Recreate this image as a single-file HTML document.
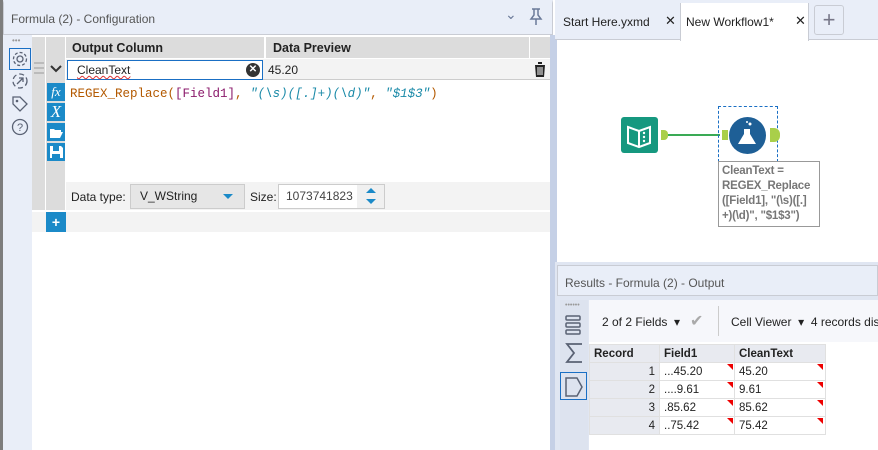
<!DOCTYPE html>
<html><head><style>
*{margin:0;padding:0;box-sizing:border-box}
body{width:878px;height:450px;overflow:hidden;background:#fff;font-family:"Liberation Sans",sans-serif;font-size:12px;color:#222;position:relative}
.a{position:absolute}
.mono{font-family:"Liberation Mono",monospace}
.ib{background:#1b8ac8;width:18px;height:18px;color:#fff;text-align:center;font-size:13px;line-height:18px;font-style:italic;font-family:"Liberation Serif",serif}
td{border:1px solid #e0e0e0;padding:0 4px;height:18px;font-size:11.5px}
</style></head><body>
<div class="a" style="left:0;top:0;width:3px;height:450px;background:#7d7d7d"></div>
<!-- left header -->
<div class="a" style="left:3px;top:0;width:550px;height:35px;background:#e9eef8;border:1px solid #c9ccd4;border-top:3px solid #e9eef8"></div>
<div class="a" style="left:11px;top:12px;color:#555">Formula (2) - Configuration</div>
<div class="a" style="left:505px;top:6px;color:#6b7a99;font-size:14px">&#8964;</div>
<svg class="a" style="left:528px;top:8px" width="16" height="18"><path d="M4 1h8M6 1v6l-3 4h10l-3-4V1M8 11v6" stroke="#6b7a99" stroke-width="1.5" fill="none"/></svg>
<!-- sidebar -->
<div class="a" style="left:3px;top:35px;width:29px;height:415px;background:#e9eef8"></div>
<div class="a" style="left:12px;top:36px;color:#999;font-size:8px">•••</div>
<div class="a" style="left:9px;top:48px;width:22px;height:22px;border:1px solid #1a6fc4"></div>
<svg class="a" style="left:10px;top:49px" width="20" height="20"><circle cx="10" cy="10" r="3" fill="none" stroke="#5a6274" stroke-width="1.3"/><circle cx="10" cy="10" r="6.5" fill="none" stroke="#5a6274" stroke-width="1.3" stroke-dasharray="3 2"/></svg>
<svg class="a" style="left:10px;top:71px" width="20" height="20"><circle cx="10" cy="10" r="7" fill="none" stroke="#5a6274" stroke-width="1.3" stroke-dasharray="5 3"/><path d="M7 13l6-6M9 7h4v4" stroke="#5a6274" stroke-width="1.3" fill="none"/></svg>
<svg class="a" style="left:10px;top:94px" width="20" height="20"><path d="M3 3h7l7 7-7 7-7-7z" fill="none" stroke="#5a6274" stroke-width="1.3"/><circle cx="7" cy="7" r="1.3" fill="#5a6274"/></svg>
<svg class="a" style="left:10px;top:117px" width="20" height="20"><circle cx="10" cy="10" r="7.5" fill="none" stroke="#5a6274" stroke-width="1.3"/><text x="10" y="14" font-size="11" text-anchor="middle" fill="#5a6274" font-family="Liberation Sans">?</text></svg>
<!-- grid -->
<div class="a" style="left:32px;top:35px;width:518px;height:415px;background:#fff"></div>
<div class="a" style="left:32px;top:37px;width:13px;height:173px;background:#dcdcdc"></div>
<div class="a" style="left:46px;top:37px;width:19px;height:173px;background:#dcdcdc"></div>
<div class="a" style="left:66px;top:37px;width:484px;height:21px;background:#dcdcdc"></div>
<div class="a" style="left:264px;top:37px;width:2px;height:21px;background:#fff"></div>
<div class="a" style="left:529px;top:37px;width:1px;height:21px;background:#fff"></div>
<div class="a" style="left:72px;top:41px;font-weight:bold;font-size:12.5px">Output Column</div>
<div class="a" style="left:273px;top:41px;font-weight:bold;font-size:12.5px">Data Preview</div>
<div class="a" style="left:66px;top:59px;width:484px;height:21px;background:#f3f3f3;border-bottom:1px solid #ccc"></div>
<div class="a" style="left:34px;top:62px;width:10px;height:12px;border-top:2px solid #bbb;border-bottom:2px solid #bbb"><div style="margin-top:3px;border-top:2px solid #bbb"></div></div>
<svg class="a" style="left:49px;top:64px" width="14" height="10"><path d="M2 2l5 5 5-5" stroke="#333" stroke-width="2" fill="none"/></svg>
<div class="a" style="left:67px;top:60px;width:196px;height:20px;background:#fff;border:1px solid #1a6fc4"></div>
<div class="a" style="left:77px;top:63px;text-decoration:underline wavy #d33;text-decoration-thickness:1px">CleanText</div>
<div class="a" style="left:246px;top:63px;width:14px;height:14px;border-radius:50%;background:#333;color:#fff;font-size:10px;line-height:14px;text-align:center;font-weight:bold">✕</div>
<div class="a" style="left:268px;top:63px">45.20</div>
<svg class="a" style="left:533px;top:61px" width="14" height="17"><path d="M1 3h12M5 3V1h4v2M2 4h10l-1 12H3z" fill="#222"/><path d="M5 6v8M7 6v8M9 6v8" stroke="#fff"/></svg>
<div class="a ib" style="left:47px;top:83px">fx</div>
<div class="a ib" style="left:47px;top:103px;font-size:17px">X</div>
<div class="a ib" style="left:47px;top:123px"><svg width="18" height="18"><path d="M3 6h4l1 1h6v2H6l-3 6z M6 9h10l-3 6H3z" fill="#fff"/></svg></div>
<div class="a ib" style="left:47px;top:143px"><svg width="18" height="18"><path d="M3 3h11l2 2v10H3z" fill="#fff"/><rect x="6" y="3" width="6" height="5" fill="#1b8ac8"/><rect x="5" y="11" width="8" height="4" fill="#1b8ac8"/></svg></div>
<div class="a mono" style="left:70px;top:87px;font-size:12.5px;color:#b35900;white-space:pre">REGEX_Replace(<span style="color:#8b1a6b">[Field1]</span>, <i style="color:#1a8aa8">"(\s)([.]+)(\d)"</i>, <i style="color:#1a8aa8">"$1$3"</i>)</div>
<div class="a" style="left:66px;top:182px;width:484px;height:28px;background:#f3f3f3"></div>
<div class="a" style="left:71px;top:190px">Data type:</div>
<div class="a" style="left:130px;top:184px;width:115px;height:25px;background:#e6e6e6;border:1px solid #ccc"></div>
<div class="a" style="left:140px;top:189px">V_WString</div>
<div class="a" style="left:223px;top:194px;width:0;height:0;border-left:5px solid transparent;border-right:5px solid transparent;border-top:5px solid #1b8ac8"></div>
<div class="a" style="left:250px;top:190px">Size:</div>
<div class="a" style="left:278px;top:184px;width:107px;height:25px;background:#fff;border:1px solid #ccc"></div>
<div class="a" style="left:286px;top:189px;color:#444">1073741823</div>
<div class="a" style="left:357px;top:185px;width:27px;height:23px;background:#f0f0f0"></div>
<div class="a" style="left:366px;top:188px;border-left:5px solid transparent;border-right:5px solid transparent;border-bottom:5px solid #1b8ac8"></div>
<div class="a" style="left:366px;top:199px;border-left:5px solid transparent;border-right:5px solid transparent;border-top:5px solid #1b8ac8"></div>
<div class="a" style="left:32px;top:212px;width:518px;height:20px;background:#f3f3f3"></div>
<div class="a" style="left:46px;top:212px;width:20px;height:20px;background:#1b8ac8;color:#fff;font-weight:bold;text-align:center;line-height:20px;font-size:14px">+</div>
<div class="a" style="left:550px;top:35px;width:5px;height:415px;background:#c5d0e6"></div>
<!-- right -->
<div class="a" style="left:555px;top:0;width:323px;height:40px;background:#e9eef8;border-bottom:1px solid #c9ccd4"></div>
<div class="a" style="left:563px;top:15px">Start Here.yxmd</div>
<div class="a" style="left:665px;top:13px;font-size:13px">✕</div>
<div class="a" style="left:680px;top:3px;width:129px;height:38px;background:#fff;border-left:1px solid #c9ccd4;border-right:1px solid #c9ccd4"></div>
<div class="a" style="left:686px;top:15px">New Workflow1*</div>
<div class="a" style="left:795px;top:13px;font-size:13px">✕</div>
<div class="a" style="left:814px;top:5px;width:30px;height:30px;border:1px solid #c9ccd4;border-radius:3px;color:#778;text-align:center;font-size:22px;line-height:27px">+</div>
<div class="a" style="left:555px;top:40px;width:2px;height:222px;background:#c5d0e6"></div>
<div class="a" style="left:621px;top:117px;width:37px;height:36px;background:#16987f;border-radius:3px"></div>
<svg class="a" style="left:621px;top:117px" width="37" height="36"><path d="M7 10l11 4 11-4v16l-11 4-11-4z" fill="none" stroke="#fff" stroke-width="2"/><path d="M18 14v16" stroke="#fff" stroke-width="2"/><circle cx="23" cy="16" r="1.2" fill="#fff"/><circle cx="23" cy="20" r="1.2" fill="#fff"/><circle cx="23" cy="24" r="1.2" fill="#fff"/></svg>
<div class="a" style="left:661px;top:130px;width:7px;height:10px;background:#a9cf4a;border-radius:0 4px 4px 0"></div>
<div class="a" style="left:668px;top:134px;width:52px;height:2px;background:#3aaa55"></div>
<div class="a" style="left:718px;top:106px;width:60px;height:56px;border:1px dashed #1a6fc4"></div>
<div class="a" style="left:722px;top:130px;width:6px;height:10px;background:#a9cf4a"></div>
<div class="a" style="left:729px;top:117px;width:37px;height:37px;border-radius:50%;background:#1e5f96"></div>
<svg class="a" style="left:729px;top:117px" width="37" height="37"><path d="M15 12h6v5l6 10H9l6-10z" fill="#fff"/><circle cx="21" cy="7" r="1.5" fill="#fff"/><circle cx="18" cy="5" r="1" fill="#fff"/></svg>
<div class="a" style="left:770px;top:128px;width:10px;height:14px;background:#a9cf4a;border-radius:0 6px 6px 0"></div>
<div class="a" style="left:718px;top:161px;width:102px;height:66px;background:#fff;border:1px solid #999;padding:2px 3px;color:#777;font-size:11.5px;font-weight:bold;line-height:15px;white-space:nowrap;overflow:hidden;letter-spacing:-0.2px">CleanText =<br>REGEX_Replace<br>([Field1], "(\s)([.]<br>+)(\d)", "$1$3")</div>
<div class="a" style="left:555px;top:262px;width:323px;height:188px;background:#e0e6f2"></div>
<div class="a" style="left:557px;top:265px;width:321px;height:31px;background:#e9eef8;border:1px solid #c9ccd4"></div>
<div class="a" style="left:565px;top:276px;color:#555">Results - Formula (2) - Output</div>
<div class="a" style="left:560px;top:300px;width:28px;height:150px;background:#dde3ef"></div>
<div class="a" style="left:565px;top:302px;color:#999;font-size:7px">••••••</div>
<svg class="a" style="left:564px;top:314px" width="20" height="22"><rect x="2" y="2" width="14" height="4" rx="1" fill="none" stroke="#5a6274" stroke-width="1.5"/><rect x="2" y="9" width="14" height="4" rx="1" fill="none" stroke="#5a6274" stroke-width="1.5"/><rect x="2" y="16" width="14" height="4" rx="1" fill="none" stroke="#5a6274" stroke-width="1.5"/></svg>
<svg class="a" style="left:564px;top:342px" width="20" height="22"><path d="M18 2H3l7 9-7 9h15" fill="none" stroke="#5a6274" stroke-width="1.8"/></svg>
<div class="a" style="left:560px;top:372px;width:27px;height:28px;border:1px solid #1a6fc4"></div>
<svg class="a" style="left:564px;top:376px" width="20" height="22"><path d="M2 2h11l5 9-5 9H2z" fill="none" stroke="#5a6274" stroke-width="1.5"/></svg>
<div class="a" style="left:589px;top:300px;width:289px;height:150px;background:#fff"></div>
<div class="a" style="left:589px;top:300px;width:289px;height:42px;background:#f6f7fb"></div>
<div class="a" style="left:602px;top:315px">2 of 2 Fields &nbsp;▾</div>
<div class="a" style="left:690px;top:311px;color:#aaa;font-size:16px">✔</div>
<div class="a" style="left:718px;top:306px;width:1px;height:30px;background:#ccc"></div>
<div class="a" style="left:731px;top:315px;white-space:nowrap">Cell Viewer &nbsp;▾ &nbsp;4 records dis</div>
<table class="a" style="left:589px;top:344px;border-collapse:collapse">
<tr style="background:#e8eaf0;font-weight:bold"><td style="width:70px"><b>Record</b></td><td style="width:75px"><b>Field1</b></td><td style="width:91px"><b>CleanText</b></td></tr>
<tr><td style="text-align:right;background:#e8eaf0">1</td><td>...45.20</td><td>45.20</td></tr>
<tr><td style="text-align:right;background:#e8eaf0">2</td><td>....9.61</td><td>9.61</td></tr>
<tr><td style="text-align:right;background:#e8eaf0">3</td><td>.85.62</td><td>85.62</td></tr>
<tr><td style="text-align:right;background:#e8eaf0">4</td><td>..75.42</td><td>75.42</td></tr>
</table>
<svg class="a" style="left:589px;top:362px" width="240" height="80"><g fill="#e00"><path d="M728 2h6v6z" transform="translate(-590 0)"/><path d="M818 2h6v6z" transform="translate(-590 0)"/><path d="M728 20h6v6z" transform="translate(-590 0)"/><path d="M818 20h6v6z" transform="translate(-590 0)"/><path d="M728 38h6v6z" transform="translate(-590 0)"/><path d="M818 38h6v6z" transform="translate(-590 0)"/><path d="M728 56h6v6z" transform="translate(-590 0)"/><path d="M818 56h6v6z" transform="translate(-590 0)"/></g></svg>
</body></html>
